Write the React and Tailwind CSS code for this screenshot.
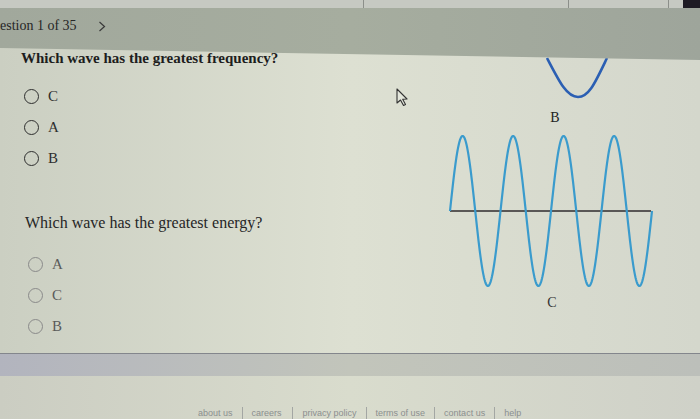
import React from "react";

function wavePath() {
  const pts = [];
  for (let i = 0; i <= 404; i++) {
    const x = 450 + i * 0.5;
    const y = 211 - 75 * Math.sin((2 * Math.PI * (x - 450)) / 50.5);
    pts.push(`${(x - 380).toFixed(2)},${(y - 50).toFixed(2)}`);
  }
  return "M" + pts.join(" L");
}

function Option({ label, circle, text }) {
  return (
    <div className="flex h-[31px] items-center gap-[9px]">
      <span className={`h-[15px] w-[15px] rounded-full border-[1.5px] ${circle}`} />
      <span className={`text-[15px] leading-none ${text}`}>{label}</span>
    </div>
  );
}

export default function App() {
  const serif = { fontFamily: '"Liberation Serif", "Times New Roman", serif' };
  return (
    <div
      className="flex h-[419px] w-[700px] flex-col overflow-hidden bg-gradient-to-r from-[#cbcfc2] via-[#dde0d2] to-[#d4d7cc]"
      style={serif}
    >
      {/* top strip */}
      <div className="flex h-[8px] shrink-0 bg-[#c6c9c2]">
        <div className="w-[363px]" />
        <div className="w-[205px] border-l border-[#8c8f8a]" />
        <div className="w-[100px] border-l border-[#8c8f8a]" />
        <div className="w-[15px] border-l border-[#8c8f8a]" />
        <div className="h-[12px] w-[17px] bg-[#1e1b24]" />
      </div>
      {/* header band */}
      <div className="relative z-10 flex h-[52px] shrink-0 items-start bg-gradient-to-r from-[#a1a89c] via-[#a6ad9f] to-[#9ea59b] pt-[10px] [clip-path:polygon(0_0,100%_0,100%_100%,0_77%)]">
        <span className="text-[14px] leading-[16px] text-[#262626]">estion 1 of 35</span>
        <svg className="ml-[21px] mt-[3px]" width="8" height="11" viewBox="0 0 8 11">
          <path d="M1.5 1 L6.5 5.5 L1.5 10" fill="none" stroke="#3a3a3a" strokeWidth="1.2" />
        </svg>
      </div>
      {/* main */}
      <div className="-mt-[10px] flex h-[303px] shrink-0">
        <div className="w-[380px] shrink-0">
          <div className="pl-[21px] text-[15px] leading-[17px] text-[#1d1d1d]" style={{ fontWeight: 700 }}>
            Which wave has the greatest frequency?
          </div>
          <div className="mt-[14px] pl-[24px]">
            <Option label="C" circle="border-[#2e2e2e]" text="text-[#2e2e2e]" />
            <Option label="A" circle="border-[#2e2e2e]" text="text-[#2e2e2e]" />
            <Option label="B" circle="border-[#2e2e2e]" text="text-[#2e2e2e]" />
          </div>
          <div className="mt-[40px] pl-[25px] text-[16px] leading-[17px] text-[#262626]">
            Which wave has the greatest energy?
          </div>
          <div className="mt-[18px] pl-[28px]">
            <Option label="A" circle="border-[#8a8a8a]" text="text-[#5a5a5a]" />
            <Option label="C" circle="border-[#8a8a8a]" text="text-[#5a5a5a]" />
            <Option label="B" circle="border-[#8a8a8a]" text="text-[#5a5a5a]" />
          </div>
        </div>
        <svg width="320" height="303" viewBox="0 0 320 303">
          {/* cursor */}
          <path
            d="M17 39 L17 53 L20.5 50 L23.5 55.5 L25.5 54.5 L22.7 49.3 L27 49 Z"
            fill="#e3e6db"
            stroke="#333"
            strokeWidth="1.1"
            strokeLinejoin="round"
          />
          {/* B wave */}
          <path
            d="M167 8 C180 33 187 47 198 47 C209 47 215 33 227 8"
            fill="none"
            stroke="#2b5fb3"
            strokeWidth="2.6"
          />
          <text x="175" y="72" textAnchor="middle" fontSize="14" fill="#222" style={serif}>B</text>
          {/* C wave */}
          <line x1="70" y1="161" x2="271" y2="161" stroke="#2f2b2e" strokeWidth="1.5" />
          <path d={wavePath()} fill="none" stroke="#3a9bcd" strokeWidth="2.2" />
          <text x="172" y="257" textAnchor="middle" fontSize="14" fill="#333" style={serif}>C</text>
        </svg>
      </div>
      {/* footer line & band */}
      <div className="h-[1px] shrink-0 bg-[#83868c]" />
      <div className="h-[22px] shrink-0 bg-gradient-to-r from-[#b2b4be] via-[#c2c5bb] to-[#bcbfba]" />
      <div
        className="flex h-[43px] shrink-0 items-start bg-gradient-to-r from-[#cbcdc2] via-[#d9dccd] to-[#cfd1c8] pl-[198px] pt-[31px] text-[9px] leading-[12px] text-[#8b8f8f]"
        style={{ fontFamily: '"Liberation Sans", Arial, sans-serif' }}
      >
        <span>about us</span>
        <span className="mx-[9px] h-[12px] border-l border-[#a3a6a3]" />
        <span>careers</span>
        <span className="mx-[10px] h-[12px] border-l border-[#a3a6a3]" />
        <span>privacy policy</span>
        <span className="mx-[9px] h-[12px] border-l border-[#a3a6a3]" />
        <span>terms of use</span>
        <span className="mx-[9px] h-[12px] border-l border-[#a3a6a3]" />
        <span>contact us</span>
        <span className="mx-[9px] h-[12px] border-l border-[#a3a6a3]" />
        <span>help</span>
      </div>
    </div>
  );
}
